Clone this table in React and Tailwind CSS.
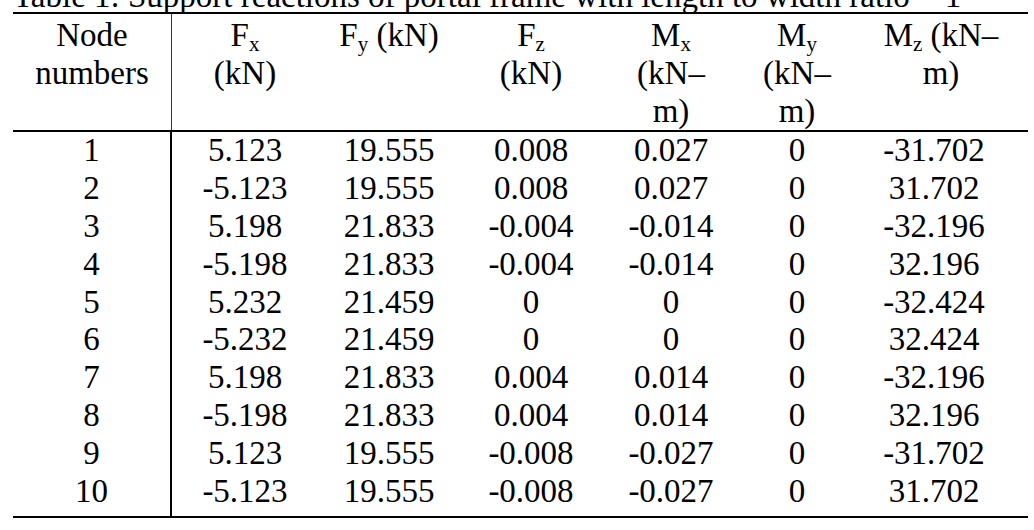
import React from "react";

const rows = [
  ["1", "5.123", "19.555", "0.008", "0.027", "0", "-31.702"],
  ["2", "-5.123", "19.555", "0.008", "0.027", "0", "31.702"],
  ["3", "5.198", "21.833", "-0.004", "-0.014", "0", "-32.196"],
  ["4", "-5.198", "21.833", "-0.004", "-0.014", "0", "32.196"],
  ["5", "5.232", "21.459", "0", "0", "0", "-32.424"],
  ["6", "-5.232", "21.459", "0", "0", "0", "32.424"],
  ["7", "5.198", "21.833", "0.004", "0.014", "0", "-32.196"],
  ["8", "-5.198", "21.833", "0.004", "0.014", "0", "32.196"],
  ["9", "5.123", "19.555", "-0.008", "-0.027", "0", "-31.702"],
  ["10", "-5.123", "19.555", "-0.008", "-0.027", "0", "31.702"],
];

const grid = "grid grid-cols-[159px_146px_142px_142px_138px_114px_174px]";

function Sub({ children }) {
  return (
    <span className="relative top-[5px] text-[21px] leading-none">{children}</span>
  );
}

export default function App() {
  return (
    <div
      className="bg-white text-black w-[1034px] h-[530px] overflow-hidden text-[33px] leading-[37.8px]"
      style={{ fontFamily: '"Liberation Serif", "Times New Roman", serif' }}
    >
      <div className="-mt-[22px] h-[34px] pl-[13px] whitespace-nowrap">
        Table 1: Support reactions of portal frame with length to width ratio = 1
      </div>
      <div className="ml-[13px] w-[1015px] border-t-2 border-b-2 border-black">
        <div className={`${grid} border-b-2 border-black text-center`}>
          <div className="border-r border-[#333] pt-[3px] pb-[1px]">
            <div>Node</div>
            <div>numbers</div>
          </div>
          <div className="pt-[3px]">
            <div>
              F<Sub>x</Sub>
            </div>
            <div>(kN)</div>
          </div>
          <div className="pt-[3px]">
            <div>
              F<Sub>y</Sub> (kN)
            </div>
          </div>
          <div className="pt-[3px]">
            <div>
              F<Sub>z</Sub>
            </div>
            <div>(kN)</div>
          </div>
          <div className="pt-[3px]">
            <div>
              M<Sub>x</Sub>
            </div>
            <div>(kN–</div>
            <div>m)</div>
          </div>
          <div className="pt-[3px]">
            <div>
              M<Sub>y</Sub>
            </div>
            <div>(kN–</div>
            <div>m)</div>
          </div>
          <div className="pt-[3px]">
            <div>
              M<Sub>z</Sub> (kN–
            </div>
            <div>m)</div>
          </div>
        </div>
        <div className="pb-[6px]">
          {rows.map((r, i) => (
            <div key={i} className={`${grid} text-center`}>
              <div className={`border-r-2 border-black ${i === 9 ? "pb-[6px] -mb-[6px]" : ""}`}>{r[0]}</div>
              <div>{r[1]}</div>
              <div>{r[2]}</div>
              <div>{r[3]}</div>
              <div>{r[4]}</div>
              <div>{r[5]}</div>
              <div className="pr-[14px]">{r[6]}</div>
            </div>
          ))}
        </div>
      </div>
    </div>
  );
}
